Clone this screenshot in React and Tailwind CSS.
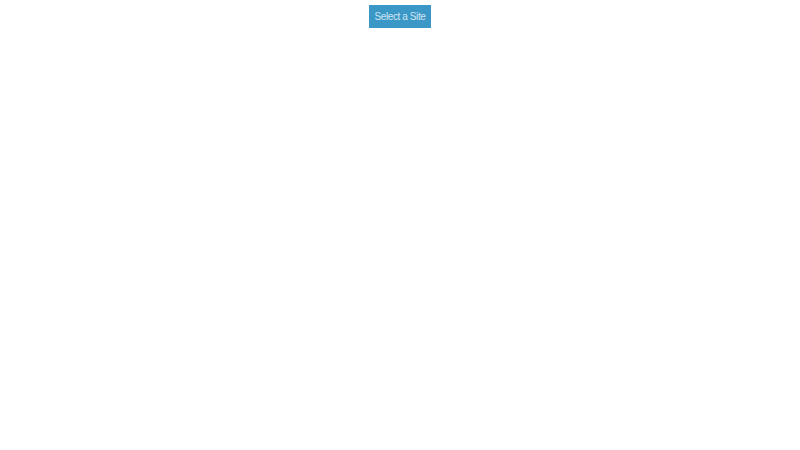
import React from 'react';

const App = () => {
    return (
        <div className="w-full h-[450px] bg-white flex justify-center pt-[5px]" style={{ fontFamily: '"Liberation Sans", Arial, sans-serif' }}>
            {/* Site picker */}
            <button className="w-[62px] h-[23px] px-0 bg-[#3b97c6] text-[#cfe5f2] text-[10px] tracking-[-0.4px] leading-[23px] border-0 text-center">
                Select a Site
            </button>
        </div>
    );
};

export default App;
